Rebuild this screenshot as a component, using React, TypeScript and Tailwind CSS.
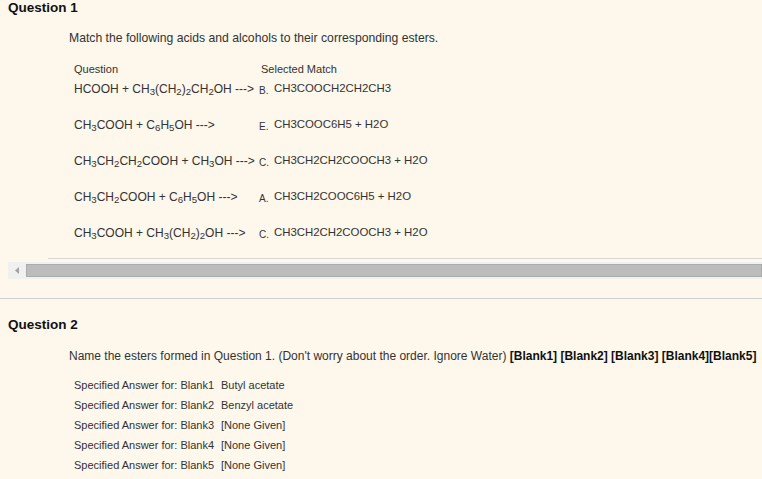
import React from "react";

type Chem = React.ReactNode;

const S = ({ children }: { children: React.ReactNode }) => (
  <sub className="text-[80%]">{children}</sub>
);

const matches: { q: Chem; letter: string; answer: string }[] = [
  {
    q: (
      <>
        HCOOH + CH<S>3</S>(CH<S>2</S>)<S>2</S>CH<S>2</S>OH ---&gt;
      </>
    ),
    letter: "B.",
    answer: "CH3COOCH2CH2CH3",
  },
  {
    q: (
      <>
        CH<S>3</S>COOH + C<S>6</S>H<S>5</S>OH ---&gt;
      </>
    ),
    letter: "E.",
    answer: "CH3COOC6H5 + H2O",
  },
  {
    q: (
      <>
        CH<S>3</S>CH<S>2</S>CH<S>2</S>COOH + CH<S>3</S>OH ---&gt;
      </>
    ),
    letter: "C.",
    answer: "CH3CH2CH2COOCH3 + H2O",
  },
  {
    q: (
      <>
        CH<S>3</S>CH<S>2</S>COOH + C<S>6</S>H<S>5</S>OH ---&gt;
      </>
    ),
    letter: "A.",
    answer: "CH3CH2COOC6H5 + H2O",
  },
  {
    q: (
      <>
        CH<S>3</S>COOH + CH<S>3</S>(CH<S>2</S>)<S>2</S>OH ---&gt;
      </>
    ),
    letter: "C.",
    answer: "CH3CH2CH2COOCH3 + H2O",
  },
];

const blanks = [
  ["Blank1", "Butyl acetate"],
  ["Blank2", "Benzyl acetate"],
  ["Blank3", "[None Given]"],
  ["Blank4", "[None Given]"],
  ["Blank5", "[None Given]"],
];

export default function App() {
  return (
    <div className="h-[479px] w-[762px] overflow-hidden bg-[#fdf7ec] font-['Liberation_Sans',Arial,sans-serif] text-[#222]">
      {/* Question 1 */}
      <div className="h-[16px] pl-[8px] text-[13.5px] leading-[16px] font-bold text-[#111]">Question 1</div>

      <div className="mt-[14px] h-[16px] pl-[69px] text-[12.2px] leading-[16px] text-[#333]">
        Match the following acids and alcohols to their corresponding esters.
      </div>

      <div className="mt-[13px] pl-[74px]">
        <div className="flex h-[20px] items-center text-[11px] text-[#333]">
          <div className="w-[187px]">Question</div>
          <div>Selected Match</div>
        </div>
        <div className="flex flex-col gap-[16px]">
          {matches.map((m, i) => (
            <div key={i} className="flex h-[20px] items-center whitespace-nowrap text-[12px] text-[#333]">
              <div className="w-[185px]">{m.q}</div>
              <div className="flex items-center">
                <span className="relative top-[2px] w-[15px] text-[10px]">{m.letter}</span>
                <span className="text-[11.4px]">{m.answer}</span>
              </div>
            </div>
          ))}
        </div>
      </div>

      <div className="mt-[15px] ml-[48px] h-px bg-[#d6d6d6]" />

      {/* horizontal scrollbar */}
      <div className="mt-[3px] ml-[8px] flex h-[17px] items-center bg-[#f0f0f0]">
        <div className="flex w-[18px] items-center justify-center">
          <svg width="4" height="7" viewBox="0 0 4 7">
            <path d="M4 0 L0 3.5 L4 7 Z" fill="#a3a3a3" />
          </svg>
        </div>
        <div className="h-[13px] flex-1 border border-[#ababab] bg-[#bcbcbc]" />
      </div>

      <div className="mt-[19px] h-px bg-[#cfcfcf]" />

      {/* Question 2 */}
      <div className="mt-[18px] h-[16px] pl-[8px] text-[13.5px] leading-[16px] font-bold text-[#111]">Question 2</div>

      <div className="mt-[15px] h-[16px] whitespace-nowrap pl-[69px] text-[12px] leading-[16px] text-[#333]">
        Name the esters formed in Question 1. (Don't worry about the order. Ignore Water){" "}
        <b className="text-[#111]">[Blank1] [Blank2] [Blank3] [Blank4][Blank5]</b>
      </div>

      <div className="mt-[11px] pl-[74px]">
        {blanks.map(([b, a]) => (
          <div key={b} className="flex h-[20px] items-center text-[11px] text-[#333]">
            <div className="w-[147px]">Specified Answer for: {b}</div>
            <div>{a}</div>
          </div>
        ))}
      </div>
    </div>
  );
}
